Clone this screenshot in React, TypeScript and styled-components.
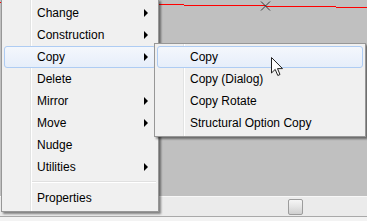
import React from "react";
import styled, { createGlobalStyle } from "styled-components";

const GlobalStyle = createGlobalStyle`
  html, body {
    margin: 0;
    padding: 0;
    overflow: hidden;
  }
  body {
    font-family: "Liberation Sans", Arial, sans-serif;
  }
`;

const Screen = styled.div`
  position: relative;
  width: 367px;
  height: 221px;
  display: flex;
  flex-direction: column;
  overflow: hidden;
  background: #f0f0f0;
`;

const Canvas = styled.div`
  height: 196px;
  background: #c0c0c0;
  flex-shrink: 0;
`;

const Drawing = styled.svg`
  display: block;
`;

const ScrollTrack = styled.div`
  height: 19px;
  flex-shrink: 0;
  display: flex;
  align-items: center;
  background: #ebebeb;
  border-top: 1px solid #f7f7f7;
`;

const Thumb = styled.div`
  margin-left: 288px;
  width: 13px;
  height: 14px;
  border: 1px solid #9c9c9c;
  border-radius: 2px;
  background: linear-gradient(#f6f6f6, #e4e4e4 50%, #cfcfcf);
`;

const BottomEdge = styled.div`
  flex: 1;
  border-top: 1px solid #a9a9a9;
  background: #f3f3f3;
`;

const Menu = styled.ul<{ $x: number; $y: number; $width: number }>`
  position: absolute;
  left: ${(p) => p.$x}px;
  top: ${(p) => p.$y}px;
  width: ${(p) => p.$width}px;
  box-sizing: border-box;
  margin: 0;
  padding: 2px;
  list-style: none;
  border: 1px solid #979797;
  background: linear-gradient(
    to right,
    #f0f0f0 0 28px,
    #e2e3e3 28px 29px,
    #ffffff 29px 30px,
    #f0f0f0 30px
  );
  box-shadow: 2px 2px 2px rgba(0, 0, 0, 0.45);
  font-size: 12px;
  color: #000;
`;

const Item = styled.li<{ $active?: boolean }>`
  position: relative;
  height: 22px;
  line-height: 20px;
  box-sizing: border-box;
  padding-left: 32px;
  border: 1px solid ${(p) => (p.$active ? "#aeccf3" : "transparent")};
  border-radius: 3px;
  background: ${(p) =>
    p.$active ? "linear-gradient(#f4f7fc, #e6eefa)" : "transparent"};
  display: flex;
  align-items: center;
  white-space: nowrap;
`;

const Label = styled.span`
  flex: 1;
`;

const Arrow = styled.span`
  width: 0;
  height: 0;
  margin-right: 7px;
  border-left: 4px solid #000;
  border-top: 4px solid transparent;
  border-bottom: 4px solid transparent;
`;

const Separator = styled.li`
  height: 1px;
  margin: 3px 0 4px 28px;
  background: #e0e0e0;
  border-bottom: 1px solid #ffffff;
`;

const Cursor = styled.svg`
  position: absolute;
  left: 271px;
  top: 57px;
`;

type Entry = { label: string; sub?: boolean; active?: boolean } | "sep";

const mainEntries: Entry[] = [
  { label: "Change", sub: true },
  { label: "Construction", sub: true },
  { label: "Copy", sub: true, active: true },
  { label: "Delete" },
  { label: "Mirror", sub: true },
  { label: "Move", sub: true },
  { label: "Nudge" },
  { label: "Utilities", sub: true },
  "sep",
  { label: "Properties" },
];

const copyEntries: Entry[] = [
  { label: "Copy", active: true },
  { label: "Copy (Dialog)" },
  { label: "Copy Rotate" },
  { label: "Structural Option Copy" },
];

const MenuList = ({
  entries,
  x,
  y,
  width,
}: {
  entries: Entry[];
  x: number;
  y: number;
  width: number;
}) => (
  <Menu $x={x} $y={y} $width={width}>
    {entries.map((e, i) =>
      e === "sep" ? (
        <Separator key={i} />
      ) : (
        <Item key={i} $active={e.active}>
          <Label>{e.label}</Label>
          {e.sub && <Arrow />}
        </Item>
      )
    )}
  </Menu>
);

const App = () => {
  return (
    <>
      <GlobalStyle />
      <Screen>
        <Canvas>
          <Drawing width="367" height="14" shapeRendering="crispEdges">
            <g stroke="#ff0000" strokeWidth="1">
              <line x1="0" y1="2.5" x2="2" y2="2.5" />
              <line x1="2" y1="4.5" x2="184" y2="4.5" />
              <line x1="184" y1="5.5" x2="266" y2="5.5" />
              <line x1="266" y1="6.5" x2="336" y2="6.5" />
              <line x1="336" y1="7.5" x2="367" y2="7.5" />
            </g>
            <g stroke="#3a3a3a" strokeWidth="1" shapeRendering="auto">
              <line x1="261" y1="1.5" x2="270" y2="10.5" />
              <line x1="270" y1="1.5" x2="261" y2="10.5" />
            </g>
          </Drawing>
        </Canvas>
        <ScrollTrack>
          <Thumb />
        </ScrollTrack>
        <BottomEdge />
        <MenuList entries={mainEntries} x={1} y={-1} width={158} />
        <MenuList entries={copyEntries} x={154} y={43} width={212} />
        <Cursor width="13" height="20" viewBox="0 0 13 20">
          <path
            d="M0.5 0.5 L0.5 16 L4.2 12.4 L6.8 18.5 L9 17.5 L6.5 11.6 L11.5 11.6 Z"
            fill="#ffffff"
            stroke="#222"
            strokeWidth="1"
            strokeLinejoin="round"
          />
        </Cursor>
      </Screen>
    </>
  );
};

export default App;
